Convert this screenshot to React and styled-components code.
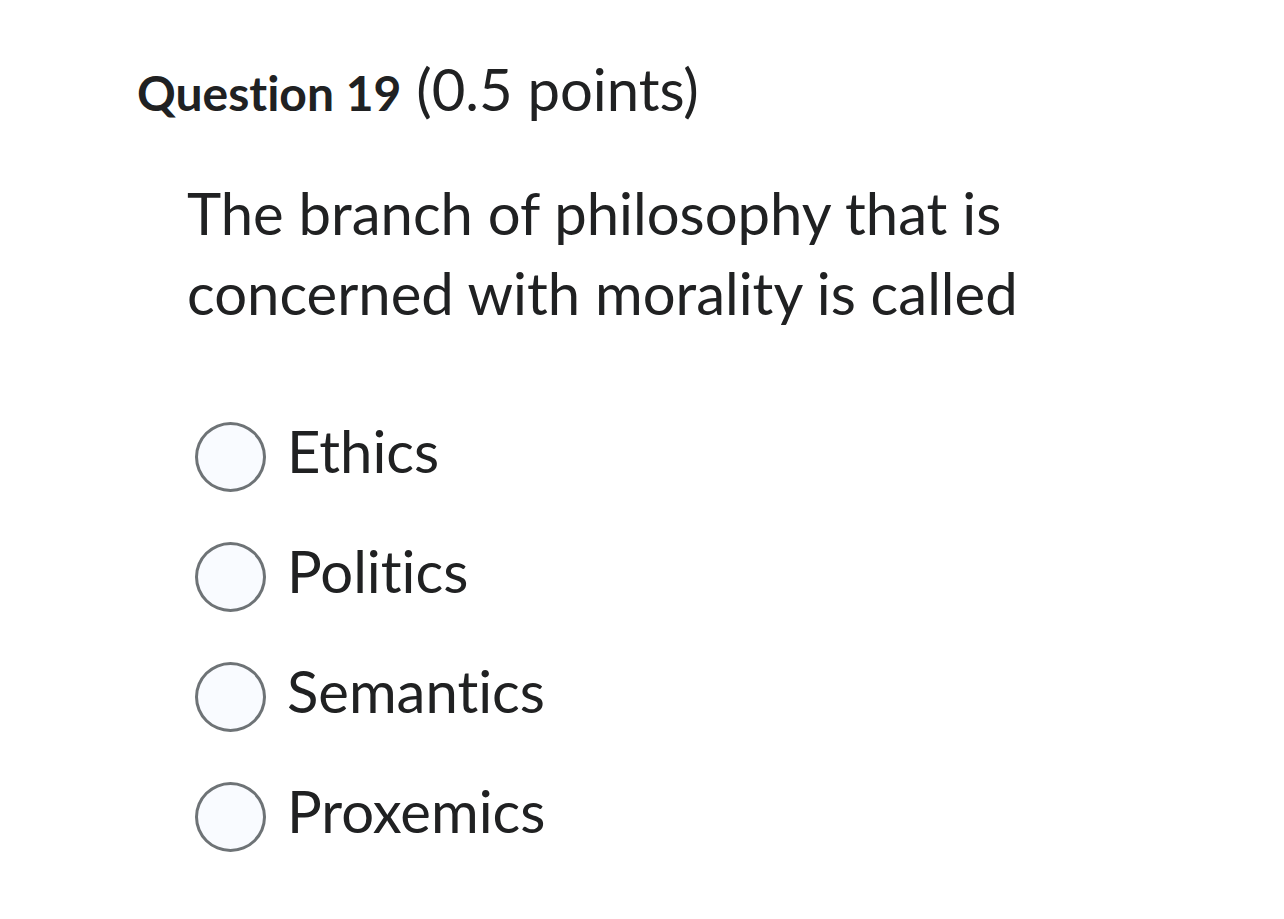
import React from "react";
import styled, { createGlobalStyle } from "styled-components";

const Global = createGlobalStyle`
  html, body { margin: 0; padding: 0; background: #ffffff; }
  body {
    font-family: Lato, "Noto Sans", sans-serif;
    color: #202122;
    font-variant-ligatures: none;
  }
`;

const Page = styled.div`
  width: 1284px;
  height: 919px;
  box-sizing: border-box;
  padding: 57px 0 0 137px;
  display: flex;
  flex-direction: column;
`;

const Heading = styled.h2`
  margin: 0;
  font-weight: 400;
  font-size: 58px;
  line-height: 64px;
  color: #202122;
`;

const Label = styled.span`
  font-weight: 700;
  font-size: 48px;
`;

const Prompt = styled.p`
  margin: 0;
  margin-top: 48px;
  padding-left: 50px;
  width: 900px;
  font-size: 58px;
  line-height: 80px;
`;

const Options = styled.div`
  display: flex;
  flex-direction: column;
  gap: 50px;
  margin-top: 89px;
  padding-left: 58px;
`;

const Option = styled.label`
  display: flex;
  align-items: center;
  gap: 21px;
  height: 70px;
  font-size: 58px;
`;

const OptionText = styled.span`
  padding-bottom: 14px;
`;

const Radio = styled.span`
  width: 71px;
  height: 70px;
  box-sizing: border-box;
  border-radius: 50%;
  border: 3px solid #6e7376;
  background: #f9fbff;
  flex: none;
`;

const choices = ["Ethics", "Politics", "Semantics", "Proxemics"];

export default function App() {
  return (
    <>
      <Global />
      <Page>
        <Heading>
          <Label>Question 19</Label> (0.5 points)
        </Heading>
        <Prompt>The branch of philosophy that is concerned with morality is called</Prompt>
        <Options>
          {choices.map((c) => (
            <Option key={c}>
              <Radio />
              <OptionText>{c}</OptionText>
            </Option>
          ))}
        </Options>
      </Page>
    </>
  );
}
